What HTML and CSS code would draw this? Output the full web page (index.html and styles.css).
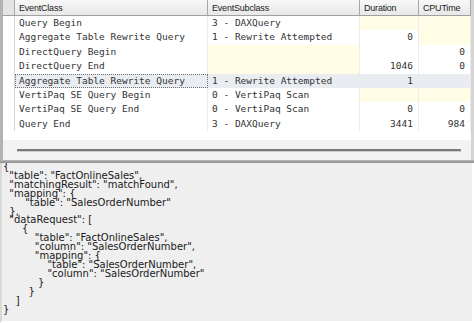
FILE: index.html
```html
<!DOCTYPE html>
<html>
<head>
<meta charset="utf-8">
<link rel="stylesheet" href="styles.css">
</head>
<body>
<div class="app">
  <div class="top">
    <div class="grid">
      <div class="h sel"></div>
      <div class="h">EventClass</div>
      <div class="h">EventSubclass</div>
      <div class="h">Duration</div>
      <div class="h">CPUTime</div>

      <div class="c sel"></div>
      <div class="c">Query Begin</div>
      <div class="c">3 - DAXQuery</div>
      <div class="c num y"></div>
      <div class="c num y"></div>

      <div class="c sel"></div>
      <div class="c">Aggregate Table Rewrite Query</div>
      <div class="c">1 - Rewrite Attempted</div>
      <div class="c num">0</div>
      <div class="c num y"></div>

      <div class="c sel"></div>
      <div class="c">DirectQuery Begin</div>
      <div class="c y"></div>
      <div class="c num"></div>
      <div class="c num">0</div>

      <div class="c sel"></div>
      <div class="c">DirectQuery End</div>
      <div class="c y"></div>
      <div class="c num">1046</div>
      <div class="c num">0</div>

      <div class="c sel"></div>
      <div class="c s focus">Aggregate Table Rewrite Query</div>
      <div class="c s">1 - Rewrite Attempted</div>
      <div class="c num s">1</div>
      <div class="c num s"></div>

      <div class="c sel"></div>
      <div class="c">VertiPaq SE Query Begin</div>
      <div class="c">0 - VertiPaq Scan</div>
      <div class="c num y"></div>
      <div class="c num y"></div>

      <div class="c sel"></div>
      <div class="c">VertiPaq SE Query End</div>
      <div class="c">0 - VertiPaq Scan</div>
      <div class="c num">0</div>
      <div class="c num">0</div>

      <div class="c sel"></div>
      <div class="c">Query End</div>
      <div class="c">3 - DAXQuery</div>
      <div class="c num">3441</div>
      <div class="c num">984</div>
    </div>
    <div class="spacer"></div>
    <div class="hscroll"><div class="track"></div></div>
  </div>
  <div class="splitter"></div>
<pre class="json">{
  "table": "FactOnlineSales",
  "matchingResult": "matchFound",
  "mapping": {
       "table": "SalesOrderNumber"
  },
  "dataRequest": [
      {
          "table": "FactOnlineSales",
          "column": "SalesOrderNumber",
          "mapping": {
              "table": "SalesOrderNumber",
              "column": "SalesOrderNumber"
           }
        }
    ]
}</pre>
</div>
</body>
</html>
```

FILE: styles.css
```css
html, body {
  margin: 0;
  padding: 0;
  background: #f0f0f0;
}
.app {
  width: 474px;
  height: 323px;
  display: flex;
  flex-direction: column;
  overflow: hidden;
}
.top {
  height: 160px;
  display: flex;
  flex-direction: column;
  background: #ffffff;
  border-left: 3px solid #b3b3b3;
  border-right: 3px solid #d4d4d4;
  box-sizing: border-box;
}
.grid {
  display: grid;
  grid-template-columns: 12px 193px 152px 59px 52px;
  grid-template-rows: 16px repeat(8, 14.4px);
}
.h {
  box-sizing: border-box;
  background: linear-gradient(#f8f8f8, #e8e8e8);
  border-right: 1px solid #a8a8a8;
  border-bottom: 1px solid #a0a0a0;
  font-family: "Liberation Sans", Arial, sans-serif;
  font-size: 9px;
  letter-spacing: -0.2px;
  color: #222;
  padding: 2px 0 0 4px;
  line-height: 12px;
  white-space: nowrap;
  overflow: hidden;
}
.h.sel {
  background: #e4e4e4;
}
.c {
  box-sizing: border-box;
  border-right: 1px solid #ececec;
  font-family: "DejaVu Sans Mono", "Liberation Mono", monospace;
  font-size: 9.5px;
  line-height: 14px;
  color: #333;
  padding: 0 0 0 4px;
  white-space: nowrap;
  overflow: hidden;
}
.c.sel {
  border-right: 1px solid #d8d8d8;
  background: #ffffff;
}
.c.num {
  text-align: right;
  padding: 0 5px 0 0;
}
.c.y {
  background: #fffde6;
}
.c.s {
  background: #e9ecf0;
}
.c.focus {
  outline: 1px dotted #707070;
  outline-offset: -1px;
}
.spacer {
  flex: 1;
}
.hscroll {
  height: 20px;
  background: #f3f3f3;
  display: flex;
  align-items: center;
  padding: 0 10px 0 14px;
}
.track {
  flex: 1;
  height: 2px;
  background: #7a7a7a;
  border-bottom: 1px solid #d0d0d0;
  border-radius: 1px;
}
.splitter {
  height: 3px;
  background: linear-gradient(#b8b8b8, #8c8c8c);
}
.json {
  flex: 1;
  margin: 0;
  padding: 0 0 0 1px;
  border-left: 2px solid #d9d9d9;
  border-right: 2px solid #ffffff;
  border-bottom: 2px solid #ffffff;
  background: #efefef;
  font-family: "DejaVu Sans", Verdana, sans-serif;
  font-size: 10px;
  line-height: 8.9px;
  color: #1a1a1a;
  white-space: pre;
  overflow: hidden;
}
```
